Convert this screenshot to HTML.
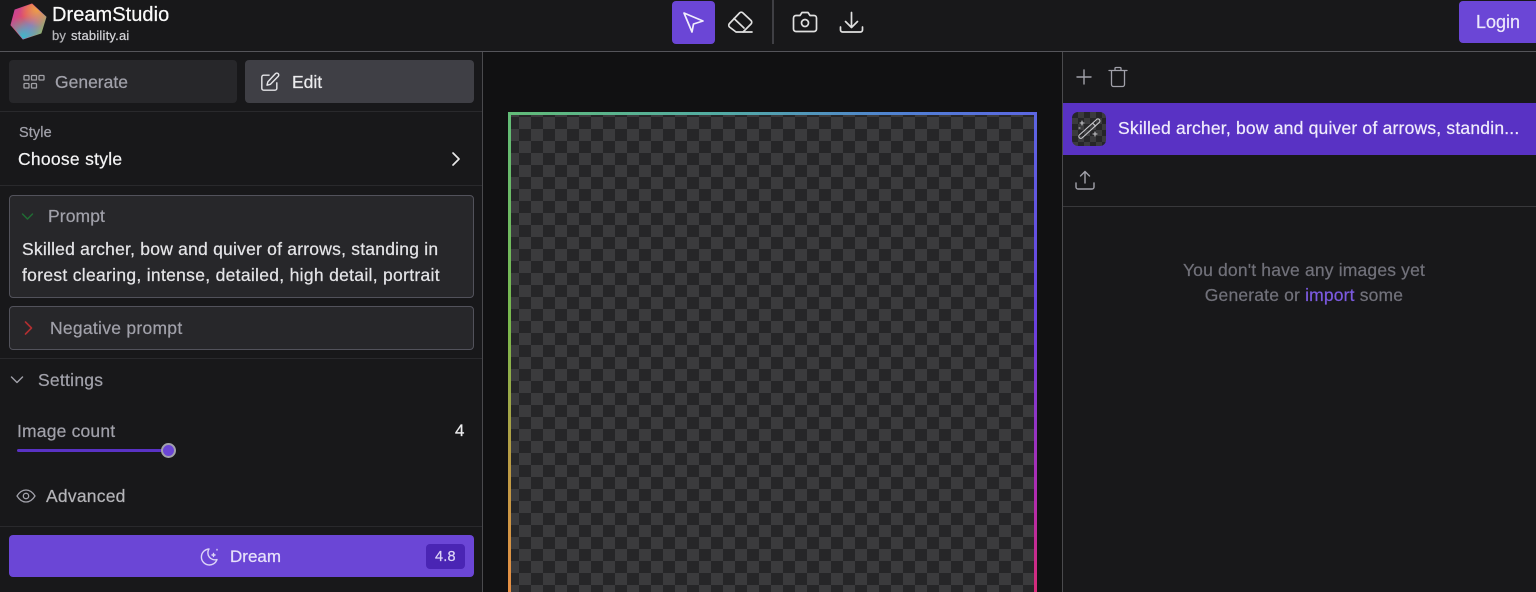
<!DOCTYPE html>
<html><head><meta charset="utf-8"><style>
*{box-sizing:border-box}
html,body{margin:0;padding:0;width:1536px;height:592px;overflow:hidden;background:#18181a;font-family:"Liberation Sans",sans-serif;color:#e4e4e7}
.a{position:absolute}
.t{position:absolute;white-space:nowrap;line-height:20px;letter-spacing:.2px;-webkit-text-stroke:.22px currentColor}
svg{position:absolute;fill:none;stroke-linecap:round;stroke-linejoin:round}
</style></head><body>
<div class="a" style="left:483px;top:52px;width:579px;height:540px;background:#111112"></div>
<div class="a" style="left:0;top:51px;width:1536px;height:1px;background:#55555a"></div>
<div class="a" style="left:482px;top:52px;width:1px;height:540px;background:#4a4a4d"></div>
<div class="a" style="left:1062px;top:52px;width:1px;height:540px;background:#4a4a4d"></div>

<!-- logo -->
<svg style="left:10px;top:3px" width="38" height="38" viewBox="0 0 38 38">
<defs><linearGradient id="lg" x1="0" y1="0.2" x2="1" y2="0.8"><stop offset="0" stop-color="#c43fa0"/><stop offset=".35" stop-color="#e0506a"/><stop offset=".6" stop-color="#b06ab0"/><stop offset="1" stop-color="#8fc25a"/></linearGradient>
<radialGradient id="lr" cx=".35" cy=".95" r=".6"><stop offset="0" stop-color="#3fb7c9"/><stop offset="1" stop-color="#3fb7c9" stop-opacity="0"/></radialGradient>
<radialGradient id="lr2" cx=".75" cy=".15" r=".5"><stop offset="0" stop-color="#f0a040"/><stop offset="1" stop-color="#f0a040" stop-opacity="0"/></radialGradient></defs>
<path d="M22 1L36 14 31 30 13 36 1 22 5 7Z" fill="url(#lg)" stroke="url(#lg)" stroke-width="1"/>
<path d="M22 1L36 14 31 30 13 36 1 22 5 7Z" fill="url(#lr)"/>
<path d="M22 1L36 14 31 30 13 36 1 22 5 7Z" fill="url(#lr2)"/>
</svg>
<div class="t" style="left:52px;top:5px;font-size:20px;color:#fafafa;letter-spacing:.05px">DreamStudio</div>
<div class="t" style="left:52px;top:26px;font-size:13px;color:#b4b4b8;letter-spacing:.2px">by <span style="color:#d4d4d8;margin-left:1px">stability.ai</span></div>

<!-- top toolbar -->
<div class="a" style="left:672px;top:1px;width:43px;height:43px;border-radius:4px;background:#6b46d6"></div>
<svg style="left:681px;top:10px" width="24" height="24" viewBox="0 0 24 24" stroke="#f1eefc" stroke-width="1.700"><path d="M3 3L22 11 12.500 14 11 22Z"/></svg>
<svg style="left:727px;top:10px" width="27" height="26" viewBox="0 0 27 26" stroke="#e0e0e0" stroke-width="1.700"><path d="M9 22L2.500 17a2.500 2.500 0 0 1 0-3.500L12.500 3a2.500 2.500 0 0 1 3.500 0L24 10.500a2.500 2.500 0 0 1 0 3.500L16 22Z"/><path d="M7 8.500l10 9.500M16 22h9"/></svg>
<div class="a" style="left:772px;top:0;width:2px;height:44px;background:#3f3f44"></div>
<svg style="left:792px;top:10px" width="26" height="26" viewBox="0 0 26 26" stroke="#e0e0e0" stroke-width="1.700"><path d="M1.500 8a2.500 2.500 0 0 1 2.500-2.500h4l2-3h6l2 3h4a2.500 2.500 0 0 1 2.500 2.500v11a2.500 2.500 0 0 1-2.500 2.500H4a2.500 2.500 0 0 1-2.500-2.500Z"/><circle cx="13" cy="13" r="3.500"/></svg>
<svg style="left:839px;top:10px" width="26" height="26" viewBox="0 0 26 26" stroke="#e0e0e0" stroke-width="1.700"><path d="M12.500 2.500v15M6.500 11.500l6 6 6-6M1.500 17v3a2 2 0 0 0 2 2h18a2 2 0 0 0 2-2v-3"/></svg>
<div class="a" style="left:1459px;top:1px;width:77px;height:42px;border-radius:4px 0 0 4px;background:#6b46d6"></div>
<div class="t" style="left:1476px;top:12px;font-size:18px;color:#ece8fb;letter-spacing:0">Login</div>

<!-- left tabs -->
<div class="a" style="left:9px;top:60px;width:228px;height:43px;border-radius:4px;background:#27272a"></div>
<svg style="left:23px;top:74px" width="22" height="16" viewBox="0 0 22 16" stroke="#a1a1a6" stroke-width="1.300"><rect x="1" y="1.500" width="5" height="4.500" rx=".8"/><rect x="8.500" y="1.500" width="5" height="4.500" rx=".8"/><rect x="16" y="1.500" width="5" height="4.500" rx=".8"/><rect x="1" y="9.500" width="5" height="4.500" rx=".8"/><rect x="8.500" y="9.500" width="5" height="4.500" rx=".8"/></svg>
<div class="t" style="left:55px;top:72px;font-size:17.500px;color:#a1a1aa;letter-spacing:0">Generate</div>
<div class="a" style="left:245px;top:60px;width:229px;height:43px;border-radius:4px;background:#3f3f45"></div>
<svg style="left:260px;top:72px" width="20" height="20" viewBox="0 0 22 22" stroke="#e4e4e7" stroke-width="1.600"><path d="M10 3.500H4a2 2 0 0 0-2 2V18a2 2 0 0 0 2 2h12.500a2 2 0 0 0 2-2v-6"/><path d="M17 1.800a2 2 0 0 1 3 3L11.500 13.500l-3.800 1 1-3.800Z"/></svg>
<div class="t" style="left:292px;top:72px;font-size:17.500px;color:#ececee;letter-spacing:0">Edit</div>
<div class="a" style="left:0;top:111px;width:482px;height:1px;background:#29292c"></div>

<!-- style -->
<div class="t" style="left:19px;top:123px;font-size:14.500px;color:#a1a1aa;letter-spacing:.1px">Style</div>
<div class="t" style="left:18px;top:149px;font-size:17.500px;color:#f4f4f5;letter-spacing:.27px">Choose style</div>
<svg style="left:449px;top:151px" width="14" height="16" viewBox="0 0 14 16" stroke="#e8e8e8" stroke-width="1.700"><path d="M4 2l6 6-6 6"/></svg>
<div class="a" style="left:0;top:185px;width:482px;height:1px;background:#29292c"></div>

<!-- prompt -->
<div class="a" style="left:9px;top:195px;width:465px;height:103px;border-radius:4px;background:#27272a;border:1px solid #52525b"></div>
<svg style="left:21px;top:212px" width="14" height="10" viewBox="0 0 14 10" stroke="#1f6b33" stroke-width="1.500"><path d="M1.500 2l5 5 5-5"/></svg>
<div class="t" style="left:48px;top:206px;font-size:17.500px;color:#a1a1aa;letter-spacing:.1px">Prompt</div>
<div class="t" style="left:22px;top:239px;font-size:17.500px;color:#e4e4e7;letter-spacing:.22px">Skilled archer, bow and quiver of arrows, standing in</div>
<div class="t" style="left:22px;top:265px;font-size:17.500px;color:#e4e4e7;letter-spacing:.3px">forest clearing, intense, detailed, high detail, portrait</div>

<div class="a" style="left:9px;top:306px;width:465px;height:44px;border-radius:4px;background:#27272a;border:1px solid #52525b"></div>
<svg style="left:23px;top:320px" width="12" height="16" viewBox="0 0 12 16" stroke="#b02f30" stroke-width="1.600"><path d="M2.500 2l6 6-6 6"/></svg>
<div class="t" style="left:50px;top:318px;font-size:17.500px;color:#a1a1aa;letter-spacing:.27px">Negative prompt</div>
<div class="a" style="left:0;top:358px;width:482px;height:1px;background:#29292c"></div>

<!-- settings -->
<svg style="left:10px;top:375px" width="14" height="10" viewBox="0 0 14 10" stroke="#a1a1aa" stroke-width="1.400"><path d="M1.500 2l5.500 5.500L12.500 2"/></svg>
<div class="t" style="left:38px;top:370px;font-size:17.500px;color:#a1a1aa;letter-spacing:.26px">Settings</div>
<div class="t" style="left:17px;top:421px;font-size:17.500px;color:#a1a1aa;letter-spacing:.18px">Image count</div>
<div class="t" style="left:455px;top:421px;font-size:17px;color:#ececee;letter-spacing:0">4</div>
<div class="a" style="left:17px;top:449px;width:150px;height:3px;background:#5932c4;border-radius:2px"></div>
<div class="a" style="left:161px;top:443px;width:15px;height:15px;border-radius:50%;background:#6b46d6;border:2px solid #a1a1aa"></div>
<svg style="left:16px;top:488px" width="20" height="16" viewBox="0 0 20 16" stroke="#a1a1aa" stroke-width="1.300"><path d="M1 8c2.500-4 5.500-6 9-6s6.500 2 9 6c-2.500 4-5.500 6-9 6s-6.500-2-9-6Z"/><circle cx="10" cy="8" r="2.700"/></svg>
<div class="t" style="left:46px;top:486px;font-size:17.500px;color:#b4b4b8;letter-spacing:.22px">Advanced</div>
<div class="a" style="left:0;top:526px;width:482px;height:1px;background:#29292c"></div>

<!-- dream -->
<div class="a" style="left:9px;top:535px;width:465px;height:42px;border-radius:4px;background:#6b46d6"></div>
<svg style="left:199px;top:547px" width="22" height="20" viewBox="0 0 22 20" stroke="#dcd4f7" stroke-width="1.400"><path d="M10 2a8 8 0 1 0 8 10.500A7 7 0 0 1 10 2Z"/><path d="M14.500 6.500v3M13 8h3M18 2.500v.5"/></svg>
<div class="t" style="left:230px;top:547px;font-size:17px;color:#e7e1fa;letter-spacing:0">Dream</div>
<div class="a" style="left:426px;top:544px;width:39px;height:25px;border-radius:4px;background:#4a25b4"></div>
<div class="t" style="left:435px;top:547px;font-size:14.500px;color:#dcd4f7;letter-spacing:.2px">4.8</div>

<!-- canvas -->
<div class="a" style="left:508px;top:112px;width:529px;height:480px;background-color:#262628;background-image:conic-gradient(#3b3b3d 25%,#262628 0 50%,#3b3b3d 0 75%,#262628 0);background-size:24px 24px;background-position:-1px 5px"></div>
<div class="a" style="left:508px;top:112px;width:529px;height:3px;background:linear-gradient(90deg,#62bc78,#52aca4 40%,#5080d4 75%,#5c66e2)"></div>
<div class="a" style="left:508px;top:112px;width:3px;height:480px;background:linear-gradient(180deg,#62bc78,#7ab84c 45%,#b89c44 72%,#e88f44)"></div>
<div class="a" style="left:1034px;top:112px;width:3px;height:480px;background:linear-gradient(180deg,#5c66e2,#6a40e0 45%,#b02cb0 80%,#d62c78)"></div>

<!-- right panel -->
<svg style="left:1075px;top:68px" width="18" height="18" viewBox="0 0 18 18" stroke="#a1a1aa" stroke-width="1.400"><path d="M9 2v14M2 9h14"/></svg>
<svg style="left:1108px;top:66px" width="20" height="22" viewBox="0 0 20 22" stroke="#a1a1aa" stroke-width="1.300"><path d="M1 4.500h18M7 4.500V2.500a1 1 0 0 1 1-1h4a1 1 0 0 1 1 1v2M3.500 4.500v14a2 2 0 0 0 2 2h9a2 2 0 0 0 2-2v-14"/></svg>
<div class="a" style="left:1063px;top:103px;width:473px;height:52px;background:#5932c4"></div>
<div class="a" style="left:1072px;top:112px;width:34px;height:34px;border-radius:6px;background-color:#262628;background-image:conic-gradient(#3b3b3d 25%,#262628 0 50%,#3b3b3d 0 75%,#262628 0);background-size:12px 12px"></div>
<svg style="left:1076px;top:116px" width="26" height="26" viewBox="0 0 26 26" stroke="#c8c8cc" stroke-width="1.100"><rect x="0" y="11" width="27" height="4" rx="2" transform="rotate(-42 13 13)"/><path d="M17 7.500l2.500 2.500M6 5v4M4 7h4M3 12h1M19 16v4M17 18h4"/></svg>
<div class="t" style="left:1118px;top:118px;font-size:17.500px;color:#f0ecfc;letter-spacing:.2px">Skilled archer, bow and quiver of arrows, standin...</div>
<svg style="left:1074px;top:169px" width="22" height="22" viewBox="0 0 22 22" stroke="#a1a1aa" stroke-width="1.400"><path d="M11 14V2.500M6.500 7L11 2.500 15.500 7M2 14v4a2 2 0 0 0 2 2h14a2 2 0 0 0 2-2v-4"/></svg>
<div class="a" style="left:1063px;top:206px;width:473px;height:1px;background:#38383b"></div>
<div class="t" style="left:1063px;width:482px;top:260px;font-size:17.500px;color:#71717a;text-align:center;letter-spacing:.17px">You don't have any images yet</div>
<div class="t" style="left:1063px;width:482px;top:285px;font-size:17.500px;color:#71717a;text-align:center;letter-spacing:.17px">Generate or <span style="color:#7c5ae0">import</span> some</div>
</body></html>
